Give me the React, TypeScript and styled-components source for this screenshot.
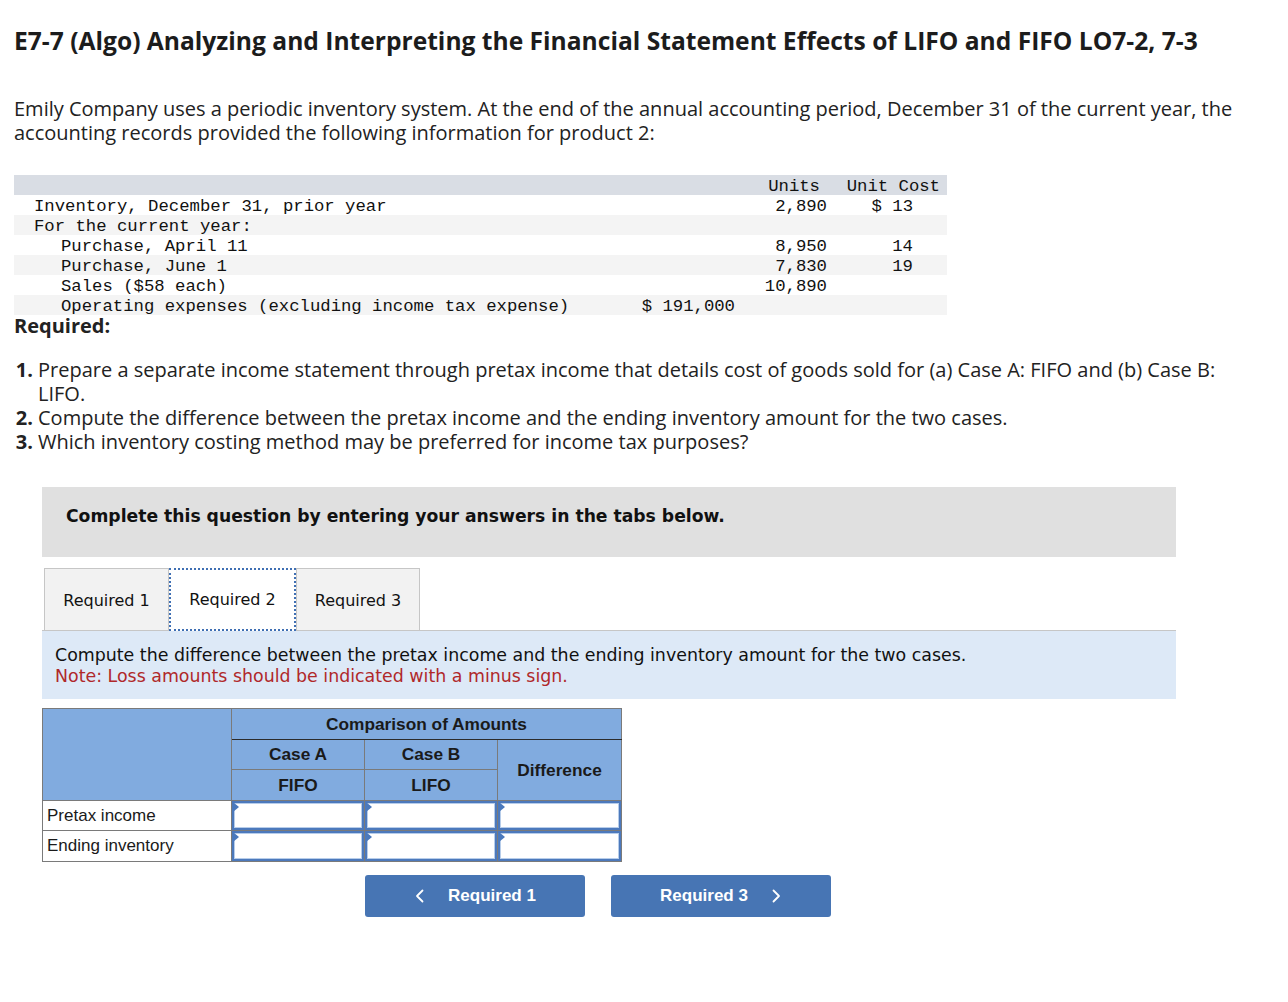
import React from "react";
import styled, { createGlobalStyle } from "styled-components";

const Global = createGlobalStyle`
  html, body { margin: 0; padding: 0; background: #fff; }
  body { font-family: "Open Sans", Lato, sans-serif; color: #222; }
`;

const Page = styled.div`
  width: 1288px;
  box-sizing: border-box;
  padding: 26px 34px 60px 14px;
`;

const Title = styled.h1`
  margin: 0;
  font-size: 24.6px;
  line-height: 30px;
  font-weight: 700;
  color: #1c1c1c;
  white-space: nowrap;
`;

const Intro = styled.p`
  margin: 41px 0 0;
  font-size: 20px;
  line-height: 24px;
  color: #222;
`;

const DataGrid = styled.div`
  margin-top: 30px;
  width: 933px;
  font-family: "Liberation Mono", "Courier New", monospace;
  font-size: 17.3px;
  color: #111;
`;

const DataRow = styled.div<{ $bg: string }>`
  display: grid;
  grid-template-columns: 614px 117px 90px 112px;
  height: 20px;
  line-height: 20px;
  background: ${(p) => p.$bg};
  white-space: pre;
`;

const Cell = styled.span<{ $indent?: number; $pr?: number; $right?: boolean }>`
  padding-top: 2px;
  padding-left: ${(p) => p.$indent ?? 0}px;
  padding-right: ${(p) => p.$pr ?? 0}px;
  text-align: ${(p) => (p.$right ? "right" : "left")};
`;

const ReqHeading = styled.h2`
  margin: 0;
  font-size: 20px;
  line-height: 22px;
  font-weight: 700;
  color: #222;
`;

const ReqList = styled.div`
  margin-top: 21px;
  display: flex;
  flex-direction: column;
  font-size: 20px;
  line-height: 24px;
`;

const ReqItem = styled.div`
  display: flex;
  gap: 5px;
`;

const ReqNum = styled.span`
  flex: 0 0 19px;
  text-align: right;
  font-weight: 700;
  white-space: nowrap;
`;

const ReqText = styled.span`
  flex: 1;
`;

const Card = styled.div`
  margin: 33px 0 0 28px;
  width: 1134px;
`;

const Instruction = styled.div`
  height: 70px;
  box-sizing: border-box;
  background: #e0e0e0;
  padding: 18px 24px 0;
  font-family: "DejaVu Sans", Verdana, sans-serif;
  font-weight: 700;
  font-size: 17.2px;
  line-height: 22px;
  color: #111;
`;

const TabBar = styled.div`
  display: flex;
  margin-top: 11px;
  padding-left: 2px;
  height: 62px;
  border-bottom: 1px solid #c6c6c6;
`;

const Tab = styled.div<{ $active?: boolean; $w: number }>`
  width: ${(p) => p.$w}px;
  box-sizing: border-box;
  height: ${(p) => (p.$active ? 63 : 62)}px;
  display: flex;
  align-items: center;
  justify-content: center;
  font-family: "DejaVu Sans", Verdana, sans-serif;
  font-size: 16px;
  color: #111;
  background: ${(p) => (p.$active ? "#fff" : "#f2f2f2")};
  border: ${(p) => (p.$active ? "2px dotted #3f6fb3" : "1px solid #c6c6c6")};
  border-bottom: ${(p) => (p.$active ? "2px dotted #3f6fb3" : "none")};
  position: relative;
  z-index: ${(p) => (p.$active ? 1 : 0)};
  padding-top: ${(p) => (p.$active ? 0 : 1)}px;
`;

const Panel = styled.div`
  height: 68px;
  box-sizing: border-box;
  background: #dde9f7;
  padding: 14px 13px 0;
  font-family: "DejaVu Sans", Verdana, sans-serif;
  font-size: 17.4px;
  line-height: 21px;
  color: #111;
`;

const Note = styled.div`
  color: #b0282a;
`;

const CompTable = styled.table`
  margin-top: 9px;
  border-collapse: collapse;
  width: 579px;
  table-layout: fixed;
  font-family: "Liberation Sans", Arial, sans-serif;
  font-size: 17px;
  color: #1a1a1a;
`;

const HeadCell = styled.th<{ $h: number; $dark?: boolean }>`
  background: #81abdf;
  border: 1px solid #7a7a7a;
  border-bottom: 1px solid ${(p) => (p.$dark ? "#2b2b2b" : "#7a7a7a")};
  height: ${(p) => p.$h}px;
  padding: 0;
  font-weight: 700;
  font-size: 17.3px;
  text-align: center;
  vertical-align: middle;
`;

const LabelCell = styled.td<{ $h: number }>`
  border: 1px solid #7a7a7a;
  height: ${(p) => p.$h}px;
  padding: 0 0 0 4px;
  background: #fff;
  vertical-align: middle;
`;

const InputCell = styled.td`
  border: 1px solid #7a7a7a;
  padding: 0;
  background: #fff;
`;

const InputBox = styled.div<{ $h: number }>`
  position: relative;
  height: ${(p) => p.$h}px;
  box-sizing: border-box;
  border: 2px solid #4c79bc;
  box-shadow: inset 0 0 0 1px #b7cdea;
  background: #fff;
  &::before {
    content: "";
    position: absolute;
    left: -1px;
    top: -1px;
    border-left: 6px solid #4a79bd;
    border-top: 5px solid transparent;
    border-bottom: 5px solid transparent;
  }
`;

const ButtonRow = styled.div`
  display: flex;
  gap: 26px;
  margin: 13px 0 0 323px;
`;

const NavButton = styled.button`
  width: 220px;
  height: 42px;
  border: none;
  border-radius: 3px;
  background: #4775b4;
  color: #fff;
  display: flex;
  align-items: center;
  justify-content: center;
  gap: 22px;
  font-family: "Liberation Sans", Arial, sans-serif;
  font-weight: 700;
  font-size: 17px;
  cursor: pointer;
  padding: 0;
`;

const Chevron = ({ dir }: { dir: "left" | "right" }) => (
  <svg width="12" height="14" viewBox="0 0 12 14" fill="none">
    <polyline
      points={dir === "left" ? "8.5,1.5 3,7 8.5,12.5" : "3.5,1.5 9,7 3.5,12.5"}
      stroke="#fff"
      strokeWidth="1.8"
      strokeLinecap="round"
      strokeLinejoin="round"
    />
  </svg>
);

const rows: { label: string; indent: number; amount?: string; units?: string; cost?: string }[] = [
  { label: "Inventory, December 31, prior year", indent: 20, units: "2,890", cost: "$ 13" },
  { label: "For the current year:", indent: 20 },
  { label: "Purchase, April 11", indent: 47, units: "8,950", cost: "14" },
  { label: "Purchase, June 1", indent: 47, units: "7,830", cost: "19" },
  { label: "Sales ($58 each)", indent: 47, units: "10,890" },
  { label: "Operating expenses (excluding income tax expense)", indent: 47, amount: "$ 191,000" },
];

export default function App() {
  return (
    <>
      <Global />
      <Page>
        <Title>
          E7-7 (Algo) Analyzing and Interpreting the Financial Statement Effects of LIFO and FIFO LO7-2, 7-3
        </Title>
        <Intro>
          Emily Company uses a periodic inventory system. At the end of the annual accounting period, December 31 of the current year, the
          accounting records provided the following information for product 2:
        </Intro>

        <DataGrid>
          <DataRow $bg="#d9dde4">
            <Cell />
            <Cell />
            <Cell $right $pr={15}>Units</Cell>
            <Cell $right $pr={7}>Unit Cost</Cell>
          </DataRow>
          {rows.map((r, i) => (
            <DataRow key={r.label} $bg={i % 2 === 0 ? "#ffffff" : "#f4f4f4"}>
              <Cell $indent={r.indent}>{r.label}</Cell>
              <Cell $right $pr={10}>{r.amount ?? ""}</Cell>
              <Cell $right $pr={8}>{r.units ?? ""}</Cell>
              <Cell $right $pr={34}>{r.cost ?? ""}</Cell>
            </DataRow>
          ))}
        </DataGrid>

        <ReqHeading>Required:</ReqHeading>
        <ReqList>
          <ReqItem>
            <ReqNum>1.</ReqNum>
            <ReqText>
              Prepare a separate income statement through pretax income that details cost of goods sold for (a) Case A: FIFO and (b) Case B:
              LIFO.
            </ReqText>
          </ReqItem>
          <ReqItem>
            <ReqNum>2.</ReqNum>
            <ReqText>Compute the difference between the pretax income and the ending inventory amount for the two cases.</ReqText>
          </ReqItem>
          <ReqItem>
            <ReqNum>3.</ReqNum>
            <ReqText>Which inventory costing method may be preferred for income tax purposes?</ReqText>
          </ReqItem>
        </ReqList>

        <Card>
          <Instruction>Complete this question by entering your answers in the tabs below.</Instruction>
          <TabBar>
            <Tab $w={125}>Required 1</Tab>
            <Tab $w={127} $active>Required 2</Tab>
            <Tab $w={124}>Required 3</Tab>
          </TabBar>
          <Panel>
            <div>Compute the difference between the pretax income and the ending inventory amount for the two cases.</div>
            <Note>Note: Loss amounts should be indicated with a minus sign.</Note>
          </Panel>

          <CompTable>
            <colgroup>
              <col style={{ width: 189 }} />
              <col style={{ width: 133 }} />
              <col style={{ width: 133 }} />
              <col style={{ width: 124 }} />
            </colgroup>
            <thead>
              <tr>
                <HeadCell $h={30} rowSpan={3} />
                <HeadCell $h={30} colSpan={3} $dark>
                  Comparison of Amounts
                </HeadCell>
              </tr>
              <tr>
                <HeadCell $h={29}>Case A</HeadCell>
                <HeadCell $h={29}>Case B</HeadCell>
                <HeadCell $h={29} rowSpan={2}>
                  Difference
                </HeadCell>
              </tr>
              <tr>
                <HeadCell $h={30}>FIFO</HeadCell>
                <HeadCell $h={30}>LIFO</HeadCell>
              </tr>
            </thead>
            <tbody>
              {["Pretax income", "Ending inventory"].map((label, i) => (
                <tr key={label}>
                  <LabelCell $h={i === 0 ? 29 : 30}>{label}</LabelCell>
                  {[0, 1, 2].map((c) => (
                    <InputCell key={c}>
                      <InputBox $h={i === 0 ? 29 : 30} />
                    </InputCell>
                  ))}
                </tr>
              ))}
            </tbody>
          </CompTable>

          <ButtonRow>
            <NavButton>
              <Chevron dir="left" />
              <span>Required 1</span>
            </NavButton>
            <NavButton>
              <span>Required 3</span>
              <Chevron dir="right" />
            </NavButton>
          </ButtonRow>
        </Card>
      </Page>
    </>
  );
}
